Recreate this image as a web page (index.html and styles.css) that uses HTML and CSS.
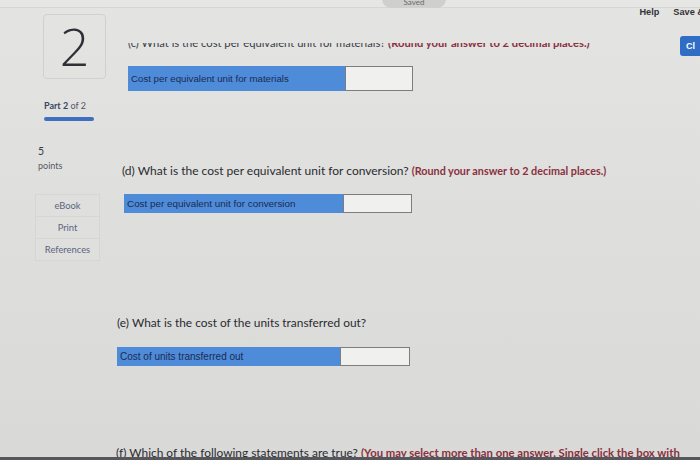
FILE: index.html
```html
<!DOCTYPE html>
<html>
<head>
<meta charset="utf-8">
<link rel="stylesheet" href="styles.css">
</head>
<body>
<div class="screen">
  <header class="topbar">
    <div class="saved">Saved</div>
    <nav class="toplinks">
      <span class="toplink">Help</span>
      <span class="toplink">Save &amp;</span>
    </nav>
  </header>
  <div class="layout">
    <aside class="side">
      <div class="qnum">2</div>
      <div class="part"><b>Part 2</b> of 2</div>
      <div class="partbar"></div>
      <div class="points"><div class="pnum">5</div><div class="plabel">points</div></div>
      <div class="tools">
        <div class="tool">eBook</div>
        <div class="tool">Print</div>
        <div class="tool">References</div>
      </div>
    </aside>
    <main class="content">
      <div class="clip"><p class="q q-c">(c) What is the cost per equivalent unit for materials? <span class="hint">(Round your answer to 2 decimal places.)</span></p></div>
      <div class="answer a1"><span class="label">Cost per equivalent unit for materials</span><span class="input"></span></div>
      <p class="q q-d">(d) What is the cost per equivalent unit for conversion? <span class="hint">(Round your answer to 2 decimal places.)</span></p>
      <div class="answer a2"><span class="label">Cost per equivalent unit for conversion</span><span class="input"></span></div>
      <p class="q q-e">(e) What is the cost of the units transferred out?</p>
      <div class="answer a3"><span class="label">Cost of units transferred out</span><span class="input"></span></div>
      <div class="clipb"><p class="q q-f">(f) Which of the following statements are true? <span class="hint">(You may select more than one answer. Single click the box with the question mark to mark the box.)</span></p></div>
    </main>
    <div class="rightcol"><span class="check">Cl</span></div>
  </div>
  <div class="bezel"></div>
</div>
</body>
</html>
```
FILE: styles.css
```css
html, body {
  margin: 0;
  padding: 0;
}
body {
  width: 700px;
  height: 460px;
  overflow: hidden;
  background: #dcdcda;
  font-family: Lato, "Open Sans", sans-serif;
  color: #2c2c30;
}
.screen {
  width: 700px;
  height: 460px;
  display: flex;
  flex-direction: column;
  background: linear-gradient(180deg, #e4e4e2 0%, #dededc 50%, #d9d9d7 100%);
  position: relative;
}
.topbar {
  height: 8px;
  border-bottom: 1px solid #d6d6d4;
  position: relative;
  background: #e6e6e4;
}
.saved {
  position: absolute;
  left: 382px;
  top: -10px;
  width: 64px;
  height: 18px;
  border-radius: 9px;
  background: #cfcfcd;
  color: #6a6a6a;
  font-size: 8px;
  line-height: 24px;
  text-align: center;
}
.toplinks {
  position: absolute;
  right: -4px;
  top: 7px;
  display: flex;
  gap: 14px;
}
.toplink {
  font-family: "Liberation Sans", Arial, sans-serif;
  font-weight: bold;
  font-size: 9.2px;
  color: #333336;
}
.layout {
  flex: 1;
  display: flex;
}
.side {
  width: 112px;
  flex: none;
  display: flex;
  flex-direction: column;
}
.qnum {
  margin: 6px 0 0 43px;
  width: 63px;
  height: 65px;
  border: 1px solid #d0d0ce;
  border-radius: 4px;
  box-sizing: border-box;
  font-family: "Open Sans", sans-serif;
  font-weight: 300;
  font-size: 52px;
  line-height: 62px;
  text-align: center;
  color: #2e3036;
}
.part {
  margin: 21px 0 0 44px;
  font-size: 9px;
  color: #556;
}
.part b {
  color: #3b4566;
  font-weight: 700;
}
.partbar {
  margin: 6px 0 0 44px;
  width: 50px;
  height: 4px;
  border-radius: 2px;
  background: #3f6fc0;
}
.points {
  margin: 24px 0 0 38px;
  color: #3c3c44;
}
.pnum {
  font-size: 10.5px;
  line-height: 13px;
}
.plabel {
  margin-top: 2px;
  font-size: 9px;
  line-height: 11px;
  color: #555a66;
}
.tools {
  margin: 23px 0 0 35px;
  width: 65px;
  display: flex;
  flex-direction: column;
}
.tool {
  height: 21px;
  border: 1px solid #d6d6d4;
  border-top: none;
  background: #dfdfdd;
  font-size: 9.4px;
  line-height: 21px;
  text-align: center;
  color: #5c6680;
}
.tool:first-child {
  border-top: 1px solid #d6d6d4;
}
.content {
  flex: 1;
  display: flex;
  flex-direction: column;
  min-width: 0;
}
.q {
  margin: 0;
  white-space: nowrap;
  font-size: 10px;
  line-height: 14px;
  color: #2b2b30;
}
.hint {
  font-weight: 700;
  font-size: 0.9em;
  color: #8a3040;
}
.clip {
  margin: 35px 0 0 16px;
  height: 6px;
  overflow: hidden;
  display: flex;
  align-items: flex-end;
}
.q-c {
  font-size: 11.2px;
  line-height: 12px;
  color: #3a3d48;
}
.q-c .hint {
  font-size: 11.2px;
}
.answer {
  display: flex;
  font-family: "Liberation Sans", Arial, sans-serif;
}
.label {
  background: #4e8cd9;
  color: #1c2a52;
  font-size: 9.7px;
  padding-left: 3px;
  display: flex;
  align-items: center;
}
.input {
  background: #f0f0ee;
  border: 1px solid #7d7d80;
  box-sizing: border-box;
}
.a1 { margin: 17px 0 0 16px; height: 25px; }
.a1 .label { width: 214px; }
.a1 .input { width: 68px; }
.q-d { margin: 73px 0 0 10px; font-size: 12px; }
.a2 { margin: 16px 0 0 12px; height: 19px; }
.a2 .label { width: 216px; font-size: 9.9px; }
.a2 .input { width: 69px; }
.q-e { margin: 103px 0 0 5px; font-size: 11.9px; }
.a3 { margin: 17px 0 0 5px; height: 19px; }
.a3 .label { width: 220px; font-size: 10px; }
.a3 .input { width: 70px; }
.clipb {
  margin: 79px 0 0 4px;
  height: 12px;
  overflow: hidden;
}
.q-f {
  font-size: 11.9px;
  line-height: 16px;
}
.q-f .hint {
  font-size: 11.3px;
}
.rightcol {
  width: 20px;
  flex: none;
}
.check {
  display: block;
  margin-top: 28px;
  height: 20px;
  border-radius: 3px 0 0 3px;
  background: #2f6ec4;
  color: #fff;
  font-family: "Liberation Sans", Arial, sans-serif;
  font-weight: bold;
  font-size: 9px;
  line-height: 20px;
  padding-left: 6px;
}
.bezel {
  height: 3px;
  background: #55575a;
}
```
